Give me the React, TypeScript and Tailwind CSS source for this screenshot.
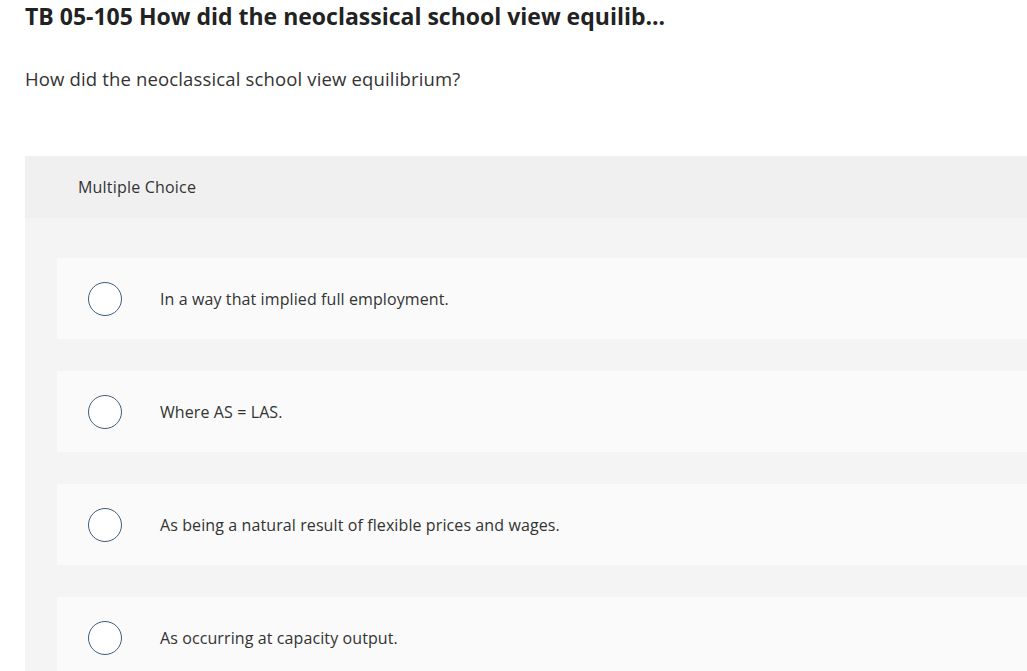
import React from 'react';

const options = [
  'In a way that implied full employment.',
  'Where AS = LAS.',
  'As being a natural result of flexible prices and wages.',
  'As occurring at capacity output.',
];

// Empty radio circle
const Radio: React.FC = () => (
  <span className="block w-[34px] h-[34px] shrink-0 rounded-full border-[1.5px] border-[#3e5c79] bg-white" />
);

export default function App() {
  return (
    <div className="h-[671px] w-[1027px] overflow-hidden bg-white text-[#333] font-['Open_Sans',sans-serif]">
      <h1 className="pl-[25px] text-[23px] leading-[32px] font-bold text-[#222]">
        TB 05-105 How did the neoclassical school view equilib...
      </h1>
      <p className="pl-[25px] pt-[34px] text-[18.5px] leading-[26px] tracking-[0.15px]">
        How did the neoclassical school view equilibrium?
      </p>
      <div className="ml-[25px] mt-[64px] w-[1040px]">
        <div className="h-[62px] bg-[#f0f0f0] pl-[53px] flex items-center text-[16px] tracking-[0.2px]">
          Multiple Choice
        </div>
        <div className="bg-[#f4f4f4] pt-[40px] pl-[32px] flex flex-col gap-[32px]">
          {options.map((o) => (
            <div key={o} className="h-[81px] bg-[#fafafa] pl-[31px] flex items-center gap-[38px] text-[16px] tracking-[0.1px]">
              <Radio />
              <span>{o}</span>
            </div>
          ))}
        </div>
      </div>
    </div>
  );
}
